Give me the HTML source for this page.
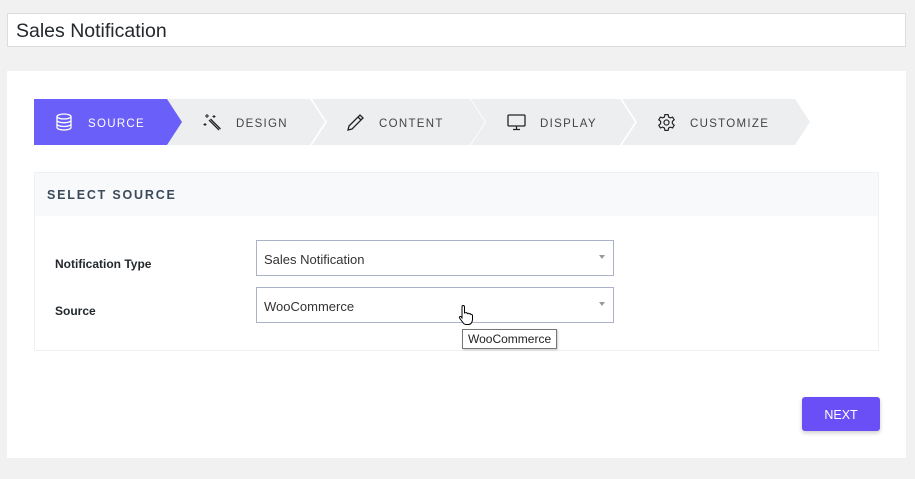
<!DOCTYPE html>
<html><head><style>
body{margin:0;width:915px;height:479px;background:#f1f1f1;font-family:"Liberation Sans",sans-serif;position:relative;overflow:hidden}
.abs{position:absolute}
.title{left:7px;top:13px;background:#fff;border:1px solid #ddd;font-size:19.5px;color:#23282d;line-height:34px;padding-left:8px;box-sizing:border-box;width:899px;height:34px}
.panel{left:7px;top:71px;width:899px;height:387px;background:#fff}
.step{top:101px;height:46px;font-size:11.5px;letter-spacing:1.3px;color:#444;line-height:46px}
.step.bg{top:99px}
.box{left:34px;top:172px;width:845px;height:179px;border:1px solid #eef0f2;box-sizing:border-box}
.hdr{left:35px;top:173px;width:843px;height:43px;background:#f8f9fa;font-weight:bold;font-size:12.5px;letter-spacing:1.8px;color:#3b4a5a;line-height:45px;padding-left:12px;box-sizing:border-box}
.lbl{font-size:12px;font-weight:bold;color:#23282d}
.sel{left:256px;width:358px;height:36px;border:1px solid #aab2c8;box-sizing:border-box;font-size:13px;color:#333;line-height:37px;padding-left:7px}
.sel:after{content:"";position:absolute;right:8px;top:14px;border:3px solid transparent;border-top:4px solid #999}
</style></head><body>
<div class="abs title">Sales Notification</div>
<div class="abs panel"></div>
<div class="abs step bg" style="left:622px;width:188px;background:#edeef0;clip-path:polygon(0 0,173px 0,188px 50%,173px 100%,0 100%,15px 50%)"></div>
<div class="abs step bg" style="left:471px;width:164px;background:#edeef0;clip-path:polygon(0 0,149px 0,164px 50%,149px 100%,0 100%,15px 50%)"></div>
<div class="abs step bg" style="left:312px;width:173px;background:#edeef0;clip-path:polygon(0 0,158px 0,173px 50%,158px 100%,0 100%,15px 50%)"></div>
<div class="abs step bg" style="left:166px;width:159px;background:#edeef0;clip-path:polygon(0 0,144px 0,159px 50%,144px 100%,0 100%,15px 50%)"></div>
<div class="abs step bg" style="left:34px;width:148px;background:#6a5ff8;clip-path:polygon(0 0,133px 0,148px 50%,133px 100%,0 100%)"></div>
<div class="abs step" style="left:88px;color:#fff">SOURCE</div>
<svg class="abs" style="left:55px;top:113px" width="18" height="18" viewBox="0 0 18 18" fill="none" stroke="#fff" stroke-width="1.3"><ellipse cx="9" cy="3.5" rx="7" ry="2.5"/><path d="M2 3.5v11c0 1.4 3 2.5 7 2.5s7-1.1 7-2.5v-11M2 7.2c0 1.4 3 2.5 7 2.5s7-1.1 7-2.5M2 11c0 1.4 3 2.5 7 2.5s7-1.1 7-2.5"/></svg>
<div class="abs step" style="left:236px">DESIGN</div>
<svg class="abs" style="left:203px;top:113px" width="18" height="18" viewBox="0 0 18 18" fill="none" stroke="#222" stroke-width="1.3"><path d="M6 7l10 10M7.5 6l10 10"/><path d="M4 1v4M2 3h4M11 2v3M9.5 3.5h3M2 10v3M.5 11.5h3" stroke-width="1"/></svg>
<div class="abs step" style="left:379px">CONTENT</div>
<svg class="abs" style="left:346px;top:113px" width="19" height="19" viewBox="0 0 19 19" fill="none" stroke="#222" stroke-width="1.3"><path d="M2 17l1-4L14 2l3 3L6 16zM12 4l3 3"/></svg>
<div class="abs step" style="left:540px">DISPLAY</div>
<svg class="abs" style="left:507px;top:114px" width="19" height="17" viewBox="0 0 19 17" fill="none" stroke="#222" stroke-width="1.3"><rect x="1" y="1" width="17" height="11" rx="1"/><path d="M9.5 12v3M6 15.5h7"/></svg>
<div class="abs step" style="left:690px">CUSTOMIZE</div>
<svg class="abs" style="left:657px;top:113px" width="19" height="19" viewBox="0 0 24 24" fill="none" stroke="#222" stroke-width="1.5"><circle cx="12" cy="12" r="3.2"/><path d="M10 2h4l.6 3 2.2 1.2 2.9-1 2 3.4-2.3 2v2.8l2.3 2-2 3.4-2.9-1-2.2 1.2-.6 3h-4l-.6-3-2.2-1.2-2.9 1-2-3.4 2.3-2v-2.8l-2.3-2 2-3.4 2.9 1L9.4 5z"/></svg>
<div class="abs box"></div>
<div class="abs hdr">SELECT SOURCE</div>
<div class="abs lbl" style="left:55px;top:257px">Notification Type</div>
<div class="abs lbl" style="left:55px;top:304px">Source</div>
<div class="abs sel" style="top:240px">Sales Notification</div>
<div class="abs sel" style="top:287px">WooCommerce</div>
<div class="abs" style="left:462px;top:329px;border:1px solid #767676;background:#fff;font-size:12px;padding:2px 5px;color:#222;box-shadow:1px 1px 2px rgba(0,0,0,.2)">WooCommerce</div>
<svg class="abs" style="left:458px;top:304px" width="18" height="22" viewBox="0 0 18 22"><path d="M5 1.5c1 0 1.5.6 1.5 1.5v6l1-.3c.6-.3 1.4 0 1.6.5l.2.3c.5-.5 1.5-.3 1.8.3.6-.4 1.6 0 1.8.7.7-.3 1.6.2 1.6 1v4c0 2.5-1.5 5-4 5H8c-1.5 0-2.5-1-3.5-2.5L1.5 14c-.6-1 .5-2 1.5-1.3l1 1.2V3c0-1 .5-1.5 1-1.5z" fill="#fff" stroke="#000" stroke-width="1"/></svg>
<div class="abs" style="left:802px;top:397px;width:78px;height:34px;background:#6a4ff7;border-radius:3px;color:#fff;font-size:12.5px;text-align:center;line-height:36px;box-shadow:0 2px 4px rgba(0,0,0,.2)">NEXT</div>
</body></html>
